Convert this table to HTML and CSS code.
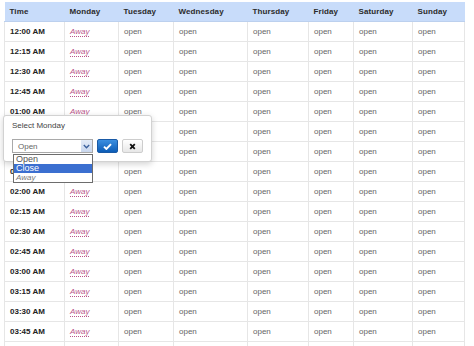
FILE: index.html
```html
<!DOCTYPE html>
<html>
<head>
<meta charset="utf-8">
<link rel="stylesheet" href="styles.css">
</head>
<body>
<div class="page">
  <table class="schedule">
    <colgroup>
      <col class="c-time"><col class="c-mon"><col class="c-tue"><col class="c-wed"><col class="c-thu"><col class="c-fri"><col class="c-sat"><col class="c-sun">
    </colgroup>
    <thead>
      <tr><th>Time</th><th>Monday</th><th>Tuesday</th><th>Wednesday</th><th>Thursday</th><th>Friday</th><th>Saturday</th><th>Sunday</th></tr>
    </thead>
    <tbody>
      <tr><td class="t">12:00 AM</td><td><span class="away">Away</span></td><td>open</td><td>open</td><td>open</td><td>open</td><td>open</td><td>open</td></tr>
      <tr><td class="t">12:15 AM</td><td><span class="away">Away</span></td><td>open</td><td>open</td><td>open</td><td>open</td><td>open</td><td>open</td></tr>
      <tr><td class="t">12:30 AM</td><td><span class="away">Away</span></td><td>open</td><td>open</td><td>open</td><td>open</td><td>open</td><td>open</td></tr>
      <tr><td class="t">12:45 AM</td><td><span class="away">Away</span></td><td>open</td><td>open</td><td>open</td><td>open</td><td>open</td><td>open</td></tr>
      <tr><td class="t">01:00 AM</td><td><span class="away">Away</span></td><td>open</td><td>open</td><td>open</td><td>open</td><td>open</td><td>open</td></tr>
      <tr><td class="t">01:15 AM</td><td><span class="away">Away</span></td><td>open</td><td>open</td><td>open</td><td>open</td><td>open</td><td>open</td></tr>
      <tr><td class="t">01:30 AM</td><td><span class="away">Away</span></td><td>open</td><td>open</td><td>open</td><td>open</td><td>open</td><td>open</td></tr>
      <tr><td class="t">01:45 AM</td><td><span class="away">Away</span></td><td>open</td><td>open</td><td>open</td><td>open</td><td>open</td><td>open</td></tr>
      <tr><td class="t">02:00 AM</td><td><span class="away">Away</span></td><td>open</td><td>open</td><td>open</td><td>open</td><td>open</td><td>open</td></tr>
      <tr><td class="t">02:15 AM</td><td><span class="away">Away</span></td><td>open</td><td>open</td><td>open</td><td>open</td><td>open</td><td>open</td></tr>
      <tr><td class="t">02:30 AM</td><td><span class="away">Away</span></td><td>open</td><td>open</td><td>open</td><td>open</td><td>open</td><td>open</td></tr>
      <tr><td class="t">02:45 AM</td><td><span class="away">Away</span></td><td>open</td><td>open</td><td>open</td><td>open</td><td>open</td><td>open</td></tr>
      <tr><td class="t">03:00 AM</td><td><span class="away">Away</span></td><td>open</td><td>open</td><td>open</td><td>open</td><td>open</td><td>open</td></tr>
      <tr><td class="t">03:15 AM</td><td><span class="away">Away</span></td><td>open</td><td>open</td><td>open</td><td>open</td><td>open</td><td>open</td></tr>
      <tr><td class="t">03:30 AM</td><td><span class="away">Away</span></td><td>open</td><td>open</td><td>open</td><td>open</td><td>open</td><td>open</td></tr>
      <tr><td class="t">03:45 AM</td><td><span class="away">Away</span></td><td>open</td><td>open</td><td>open</td><td>open</td><td>open</td><td>open</td></tr>
      <tr><td class="t">04:00 AM</td><td><span class="away">Away</span></td><td>open</td><td>open</td><td>open</td><td>open</td><td>open</td><td>open</td></tr>
    </tbody>
  </table>

  <div class="popover">
    <div class="popover-title">Select Monday</div>
    <div class="popover-body">
      <div class="select">
        <span class="select-value">Open</span>
        <span class="select-arrow">
          <svg width="7" height="5" viewBox="0 0 7 5"><path d="M0.8 1 L3.5 3.8 L6.2 1" fill="none" stroke="#3a5f9c" stroke-width="1.3"/></svg>
        </span>
      </div>
      <button class="btn btn-ok">
        <svg width="9" height="7" viewBox="0 0 9 7"><path d="M1 3.6 L3.4 6 L8 1.2" fill="none" stroke="#fff" stroke-width="1.9"/></svg>
      </button>
      <button class="btn btn-cancel">
        <svg width="7" height="7" viewBox="0 0 7 7"><path d="M1.2 1.2 L5.8 5.8 M5.8 1.2 L1.2 5.8" fill="none" stroke="#111" stroke-width="1.8"/></svg>
      </button>
    </div>
    <ul class="options">
      <li>Open</li>
      <li class="selected">Close</li>
      <li class="dim">Away</li>
    </ul>
  </div>
</div>
</body>
</html>
```

FILE: styles.css
```css
html, body {
  margin: 0;
  padding: 0;
  background: #fff;
}
.page {
  position: relative;
  padding: 2px 0 0 4px;
  font-family: "Liberation Sans", Arial, sans-serif;
}
.schedule {
  border-collapse: collapse;
  table-layout: fixed;
  width: 460px;
  font-size: 8px;
}
.c-time { width: 60px; }
.c-mon { width: 54px; }
.c-tue { width: 55px; }
.c-wed { width: 74px; }
.c-thu { width: 61px; }
.c-fri { width: 45px; }
.c-sat { width: 59px; }
.c-sun { width: 52px; }
.schedule th {
  background: #c8dcfa;
  color: #2b2b2b;
  font-weight: bold;
  text-align: left;
  height: 19px;
  padding: 0 0 0 5px;
  border: 0;
  border-bottom: 1px solid #bcd0ee;
  line-height: 19px;
  letter-spacing: 0.1px;
}
.schedule td {
  height: 19px;
  padding: 0 0 0 5px;
  border: 1px solid #e6e6e6;
  color: #666;
  line-height: 19px;
  white-space: nowrap;
  overflow: hidden;
}
.schedule td.t {
  color: #222;
  font-weight: bold;
}
.away {
  color: #b9558a;
  font-style: italic;
  border-bottom: 1px dotted #b9558a;
  padding-bottom: 0;
  line-height: 9px;
  display: inline-block;
}
.popover {
  position: absolute;
  left: 3px;
  top: 115px;
  width: 147px;
  height: 45px;
  background: #fff;
  border: 1px solid #d2d2d2;
  border-radius: 3px;
  box-shadow: 0 2px 6px rgba(0, 0, 0, 0.18);
}
.popover-title {
  font-size: 8px;
  color: #444;
  padding: 5px 0 0 8px;
  height: 12px;
  line-height: 10px;
}
.popover-body {
  display: flex;
  align-items: center;
  gap: 4px;
  padding: 6px 0 0 8px;
}
.select {
  box-sizing: border-box;
  width: 81px;
  height: 14px;
  border: 1px solid #a9a9a9;
  background: #fff;
  display: flex;
  align-items: center;
  justify-content: space-between;
  margin-right: 0;
}
.select-value {
  font-size: 8px;
  color: #666;
  padding-left: 5px;
}
.select-arrow {
  width: 11px;
  height: 12px;
  background: linear-gradient(#e3ebf7, #c9d7ee);
  display: flex;
  align-items: center;
  justify-content: center;
  margin-right: 0;
}
.btn {
  box-sizing: border-box;
  width: 21px;
  height: 14px;
  padding: 0;
  border-radius: 2px;
  display: flex;
  align-items: center;
  justify-content: center;
}
.btn-ok {
  background: linear-gradient(#3b8fe0, #0c5cb6);
  border: 1px solid #1a5aa6;
}
.btn-cancel {
  background: linear-gradient(#ffffff, #e7e7e7);
  border: 1px solid #cdcdcd;
}
.options {
  position: absolute;
  left: 9px;
  top: 38px;
  width: 78px;
  margin: 0;
  padding: 0;
  list-style: none;
  background: #fff;
  border: 1px solid #6d6d6d;
  font-size: 9px;
}
.options li {
  height: 9px;
  line-height: 9px;
  padding-left: 2px;
  color: #555;
}
.options li.selected {
  background: #3b6fd0;
  color: #fff;
}
.options li.dim {
  color: #777;
  font-size: 8px;
  font-style: italic;
}
```
